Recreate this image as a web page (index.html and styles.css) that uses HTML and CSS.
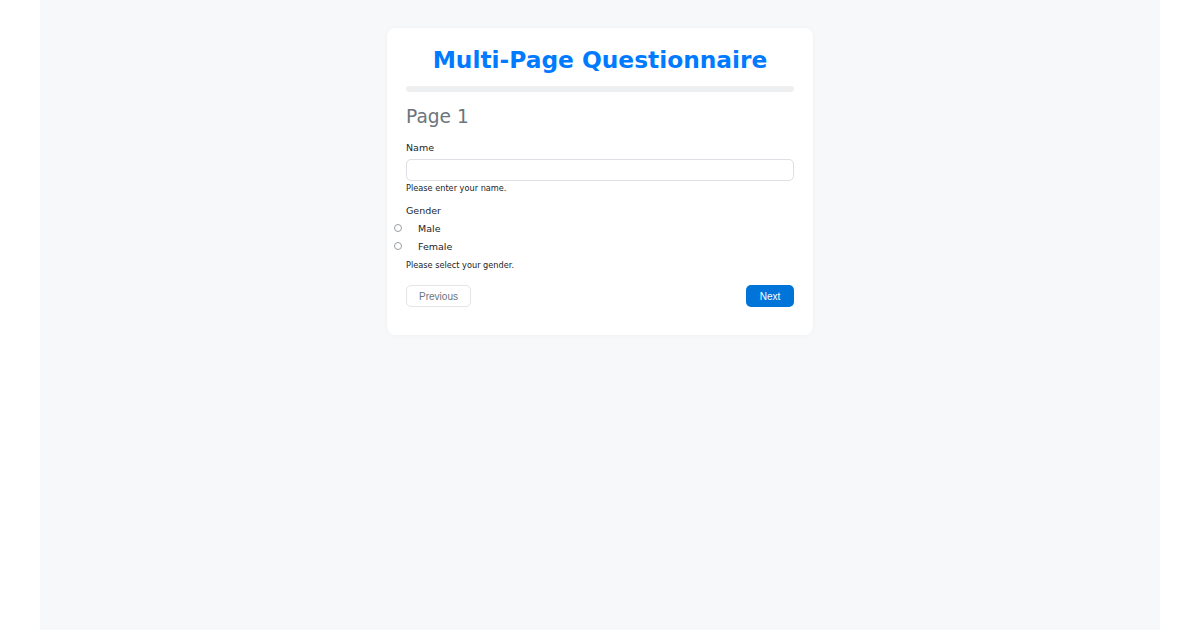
FILE: index.html
```html
<!DOCTYPE html>
<html lang="en">
<head>
    <meta charset="UTF-8">
    <title>Multi-Page Questionnaire</title>
    <link rel="stylesheet" href="styles.css">
</head>
<body>
    <div class="page">
        <div class="card">
            <h1>Multi-Page Questionnaire</h1>
            <div class="progress"><div class="progress-bar"></div></div>
            <h2>Page 1</h2>
            <div class="field">
                <label class="field-label" for="name">Name</label>
                <input type="text" id="name" class="text-input">
                <p class="help">Please enter your name.</p>
            </div>
            <div class="field">
                <span class="field-label">Gender</span>
                <label class="radio"><input type="radio" name="gender"><span>Male</span></label>
                <label class="radio"><input type="radio" name="gender"><span>Female</span></label>
                <p class="help">Please select your gender.</p>
            </div>
            <div class="actions">
                <button class="btn btn-prev">Previous</button>
                <button class="btn btn-next">Next</button>
            </div>
        </div>
    </div>
</body>
</html>
```

FILE: styles.css
```css
* {
    margin: 0;
    padding: 0;
    box-sizing: border-box;
}
body {
    font-family: 'DejaVu Sans', sans-serif;
    background: #fff;
    color: #212529;
}
.page {
    width: 1120px;
    min-height: 630px;
    margin: 0 auto;
    background: #f7f8fa;
    padding-top: 28px;
}
.card {
    width: 426px;
    margin: 0 auto;
    background: #fff;
    border-radius: 8px;
    box-shadow: 0 0 4px rgba(0, 0, 0, 0.04);
    padding: 18px 19px 28px;
}
h1 {
    text-align: center;
    font-size: 23.3px;
    line-height: 28px;
    font-weight: bold;
    color: #007bff;
}
.progress {
    height: 6px;
    margin-top: 12px;
    background: #eeeff1;
    border-radius: 3px;
}
.progress-bar {
    width: 0;
}
h2 {
    font-size: 18.6px;
    font-weight: normal;
    line-height: 24px;
    color: #6c757d;
    margin-top: 13px;
}
.field {
    margin-top: 12px;
}
.field + .field {
    margin-top: 10px;
}
.field-label {
    display: block;
    font-size: 9.5px;
    line-height: 14px;
    color: #212529;
    margin-bottom: 4px;
}
.text-input {
    display: block;
    width: 100%;
    height: 22px;
    border: 1px solid #dcdfe3;
    border-radius: 5px;
    background: #fff;
}
.help {
    font-size: 8.2px;
    line-height: 11px;
    margin-top: 2px;
    color: #212529;
}
.radio {
    display: flex;
    align-items: center;
    height: 18px;
    font-size: 9.5px;
    margin-left: -12px;
    color: #212529;
}
.radio input {
    appearance: none;
    width: 8px;
    height: 8px;
    border: 1px solid #9a9ea3;
    border-radius: 50%;
    margin-right: 16px;
}
.field .radio:first-of-type {
    margin-top: -3px;
}
.radio + .radio + .help {
    margin-top: 5px;
}
.actions {
    display: flex;
    justify-content: space-between;
    margin-top: 14px;
}
.btn {
    font-family: 'Liberation Sans', Arial, sans-serif;
    font-size: 10px;
    height: 22px;
    border-radius: 5px;
    cursor: pointer;
}
.btn-prev {
    width: 65px;
    background: #fff;
    color: #6c757d;
    border: 1px solid #e3e5e8;
}
.btn-next {
    width: 48px;
    background: #0074d9;
    color: #fff;
    border: none;
}
```
